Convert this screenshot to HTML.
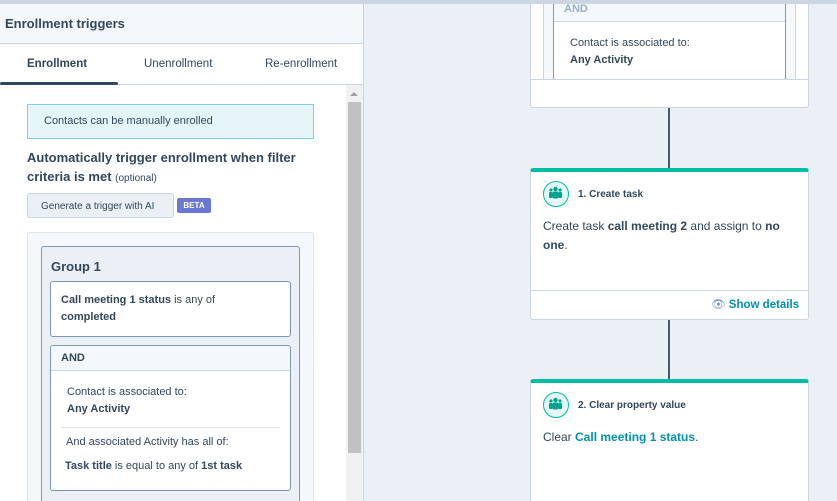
<!DOCTYPE html>
<html style="width:837px;height:501px;overflow:hidden"><head><style>
*{box-sizing:border-box;margin:0;padding:0}
body{width:837px;height:501px;overflow:hidden;background:#eaf0f6;font-family:"Liberation Sans",sans-serif;color:#33475b;position:relative;font-size:12px}
.a{position:absolute}
b{font-weight:bold}
</style></head><body>
<div class="a" style="left:0;top:0;width:837px;height:4px;background:#cbd6e2"></div>
<!-- left panel -->
<div class="a" style="left:0;top:4px;width:364px;height:497px;background:#fff;border-right:1px solid #cbd6e2;overflow:hidden">
 <div class="a" style="left:0;top:0;width:363px;height:40px;background:#f5f8fa;border-bottom:1px solid #cbd6e2"></div>
 <div class="a" style="left:5px;top:12px;font-size:13px;font-weight:bold">Enrollment triggers</div>
 <div class="a" style="left:27px;top:54px;font-weight:bold;font-size:11.5px">Enrollment</div>
 <div class="a" style="left:144px;top:54px;font-size:11.5px">Unenrollment</div>
 <div class="a" style="left:265px;top:54px;font-size:11.5px">Re-enrollment</div>
 <div class="a" style="left:0;top:80px;width:363px;height:1px;background:#cbd6e2"></div>
 <div class="a" style="left:0;top:78px;width:118px;height:3px;background:#33475b;border-radius:2px"></div>
 <div class="a" style="left:346px;top:81px;width:17px;height:416px;background:#f1f1f1"></div>
 <div class="a" style="left:350px;top:88px;width:0;height:0;border-left:4px solid transparent;border-right:4px solid transparent;border-bottom:4px solid #a3a3a3"></div>
 <div class="a" style="left:348px;top:98px;width:13px;height:351px;background:#c1c1c1"></div>
 <div class="a" style="left:27px;top:100px;width:287px;height:35px;background:#e5f5f8;border:1px solid #7fd1de"></div>
 <div class="a" style="left:44px;top:111px;font-size:11px">Contacts can be manually enrolled</div>
 <div class="a" style="left:27px;top:144px;width:300px;font-size:13px;font-weight:bold;line-height:19px">Automatically trigger enrollment when filter criteria is met <span style="font-weight:normal;font-size:10px">(optional)</span></div>
 <div class="a" style="left:27px;top:189px;width:147px;height:25px;background:#eaf0f6;border:1px solid #cbd6e2;border-radius:3px;font-size:10px;padding:7px 0 0 13px">Generate a trigger with AI</div>
 <div class="a" style="left:177px;top:194px;width:34px;height:15px;background:#6a78d1;border-radius:2px;color:#fff;font-size:8px;font-weight:bold;text-align:center;line-height:15px">BETA</div>
 <div class="a" style="left:27px;top:228px;width:287px;height:280px;background:#f5f8fa;border:1px solid #dfe3eb;border-radius:3px"></div>
 <div class="a" style="left:41px;top:242px;width:259px;height:260px;background:#eaf0f6;border:1px solid #7c98b6;border-radius:3px"></div>
 <div class="a" style="left:51px;top:255px;font-size:13px;font-weight:bold">Group 1</div>
 <div class="a" style="left:50px;top:277px;width:241px;height:56px;background:#fff;border:1px solid #7c98b6;border-radius:3px;padding:10px 10px;line-height:17px;font-size:11px"><div style="width:170px"><b>Call meeting 1 status</b> is any of <b>completed</b></div></div>
 <div class="a" style="left:50px;top:341px;width:241px;height:146px;background:#fff;border:1px solid #7c98b6;border-radius:3px;overflow:hidden">
  <div style="height:25px;background:#f5f8fa;border-bottom:1px solid #cbd6e2;font-weight:bold;font-size:11px;padding:6px 0 0 10px">AND</div>
  <div class="a" style="left:16px;top:40px;font-size:11px">Contact is associated to:</div>
  <div class="a" style="left:16px;top:57px;font-size:11px;font-weight:bold">Any Activity</div>
  <div class="a" style="left:10px;top:81px;width:219px;height:1px;background:#dfe3eb"></div>
  <div class="a" style="left:15px;top:90px;font-size:11px">And associated Activity has all of:</div>
  <div class="a" style="left:14px;top:114px;font-size:11px"><b>Task title</b> is equal to any of <b>1st task</b></div>
 </div>
</div>
<!-- right canvas -->
<div class="a" style="left:668px;top:107px;width:2px;height:62px;background:#425b76"></div>
<div class="a" style="left:668px;top:319px;width:2px;height:61px;background:#425b76"></div>
<div class="a" style="left:530px;top:4px;width:279px;height:104px;background:#fff;border:1px solid #cbd6e2;border-top:none;border-radius:0 0 3px 3px"></div>
<div class="a" style="left:543px;top:4px;width:253px;height:75px;background:#f5f8fa;border-left:1px solid #cbd6e2;border-right:1px solid #cbd6e2"></div>
<div class="a" style="left:553px;top:4px;width:233px;height:75px;background:#fff;border-left:1px solid #7c98b6;border-right:1px solid #7c98b6"></div>
<div class="a" style="left:554px;top:4px;width:231px;height:18px;background:#f5f8fa;border-bottom:1px solid #cbd6e2;font-size:11px;font-weight:bold;color:#99afc4;padding:0 0 0 10px;line-height:10px">AND</div>
<div class="a" style="left:570px;top:37px;font-size:11px">Contact is associated to:</div>
<div class="a" style="left:570px;top:54px;font-size:11px;font-weight:bold">Any Activity</div>
<div class="a" style="left:530px;top:79px;width:279px;height:1px;background:#cbd6e2"></div>

<div class="a" style="left:530px;top:168px;width:279px;height:152px;background:#fff;border:1px solid #cbd6e2;border-top:4px solid #00bda5;border-radius:3px"></div>
<div class="a" style="left:543px;top:181px;width:26px;height:26px;border-radius:50%;background:#e5f8f6;border:1.5px solid #00bda5"><svg width="23" height="23" viewBox="0 0 23 23"><g fill="#00a38d"><circle cx="11.5" cy="7" r="2.2"/><rect x="8.5" y="9.5" width="6" height="7" rx="1.5"/><circle cx="7" cy="8" r="1.6"/><rect x="5" y="10" width="3.5" height="6" rx="1"/><circle cx="16" cy="8" r="1.6"/><rect x="14.5" y="10" width="3.5" height="6" rx="1"/></g></svg></div>
<div class="a" style="left:578px;top:189px;font-size:10px;font-weight:bold">1. Create task</div>
<div class="a" style="left:543px;top:217px;width:240px;font-size:12px;line-height:19px">Create task <b>call meeting 2</b> and assign to <b>no one</b>.</div>
<div class="a" style="left:531px;top:290px;width:277px;height:1px;background:#cbd6e2"></div>
<div class="a" style="left:711px;top:297px;font-size:11.5px;font-weight:bold;color:#0091ae"><span style="color:#7c98b6;font-weight:normal">👁</span> Show details</div>

<div class="a" style="left:530px;top:379px;width:279px;height:130px;background:#fff;border:1px solid #cbd6e2;border-top:4px solid #00bda5;border-radius:3px"></div>
<div class="a" style="left:543px;top:392px;width:26px;height:26px;border-radius:50%;background:#e5f8f6;border:1.5px solid #00bda5"><svg width="23" height="23" viewBox="0 0 23 23"><g fill="#00a38d"><circle cx="11.5" cy="7" r="2.2"/><rect x="8.5" y="9.5" width="6" height="7" rx="1.5"/><circle cx="7" cy="8" r="1.6"/><rect x="5" y="10" width="3.5" height="6" rx="1"/><circle cx="16" cy="8" r="1.6"/><rect x="14.5" y="10" width="3.5" height="6" rx="1"/></g></svg></div>
<div class="a" style="left:578px;top:400px;font-size:10px;font-weight:bold">2. Clear property value</div>
<div class="a" style="left:543px;top:430px;font-size:12px">Clear <b style="color:#0091ae">Call meeting 1 status</b>.</div>
</body></html>
